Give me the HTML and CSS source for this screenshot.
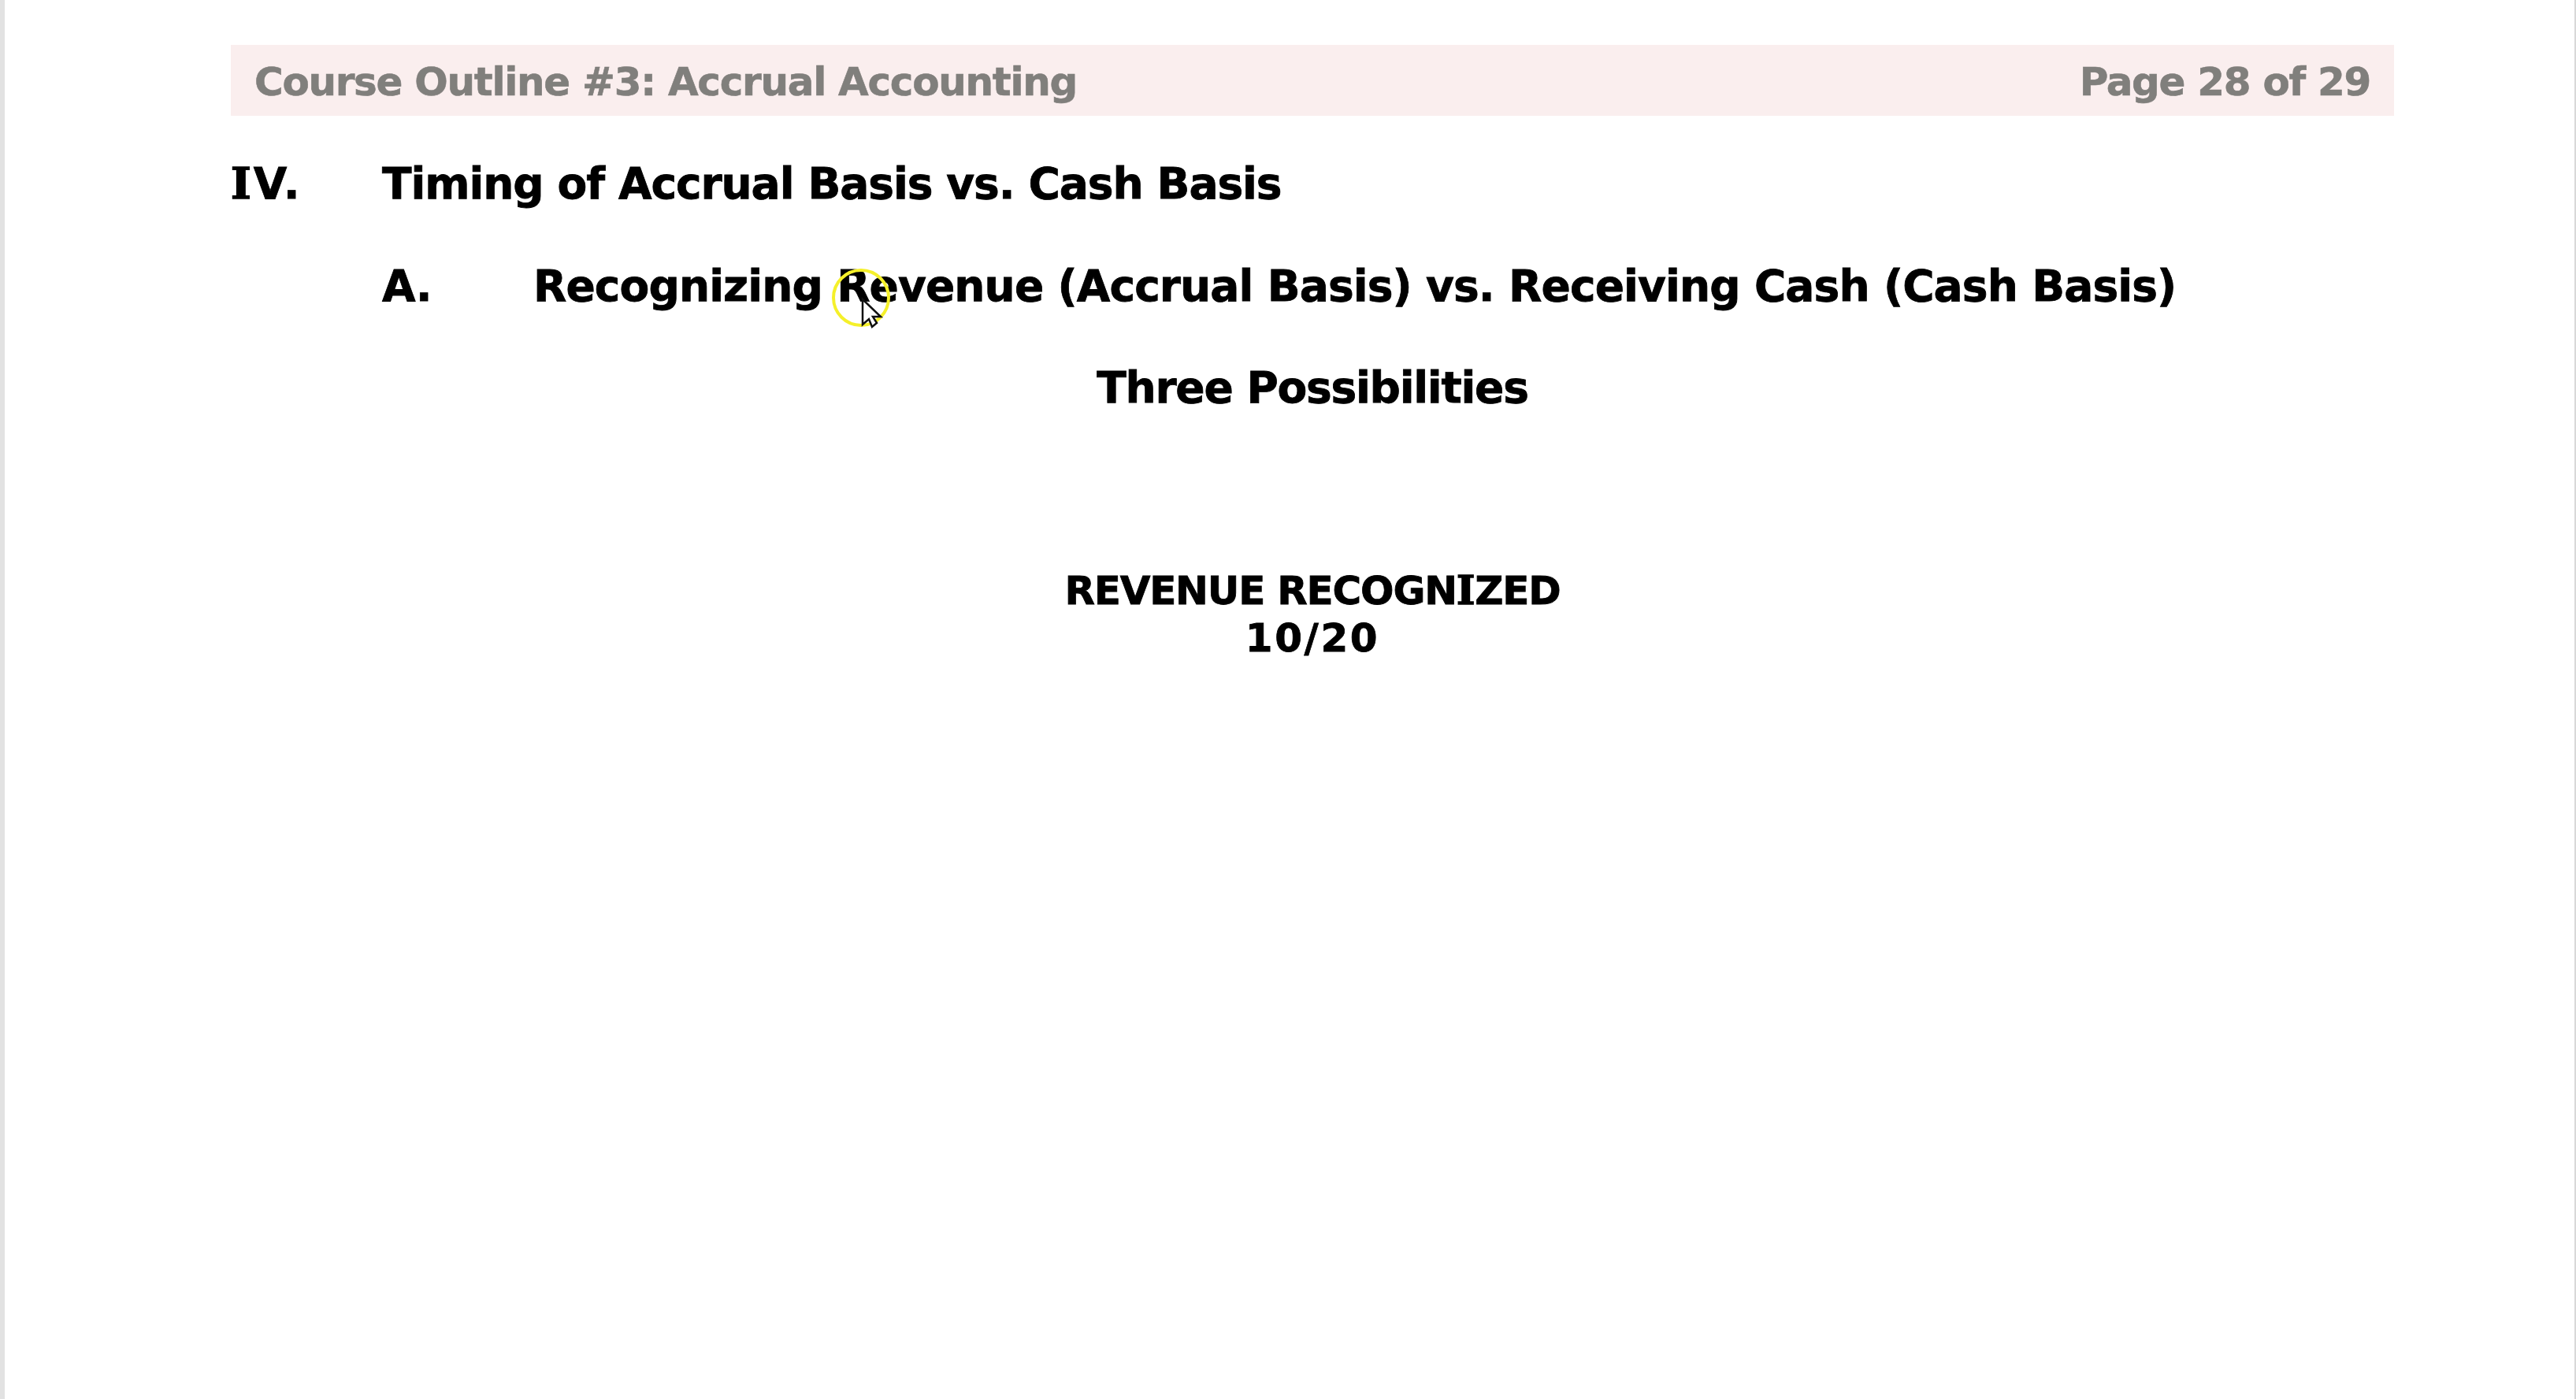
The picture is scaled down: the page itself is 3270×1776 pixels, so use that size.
FILE: index.html
```html
<!DOCTYPE html>
<html lang="en">
<head>
<meta charset="utf-8">
<title>Course Outline #3: Accrual Accounting</title>
<link rel="stylesheet" href="styles.css">
</head>
<body>
<main class="slide">
  <header class="band">
    <span>Course Outline #3: Accrual Accounting</span>
    <span>Page 28 of 29</span>
  </header>
  <h1 class="row row-one"><span class="num num-roman"><span class="serif-i roman">I</span>V.</span><span>Timing of Accrual Basis vs. Cash Basis</span></h1>
  <h2 class="row row-two"><span class="num">A.</span><span>Recognizing Revenue (Accrual Basis) vs. Receiving Cash (Cash Basis)</span></h2>
  <h3 class="center possibilities">Three Possibilities</h3>
  <p class="center event">REVENUE RECOGN<span class="serif-i">I</span>ZED<br><span class="date">10/20</span></p>
</main>
<svg class="cursor" width="80" height="90" viewBox="0 0 80 90" aria-hidden="true">
  <circle cx="37" cy="37" r="35" fill="none" stroke="#f5f02a" stroke-width="4"/>
  <path d="M39 39 L39 71 L47 64 L51 74 L57 69 L52 61 L62 61 Z" fill="#fff" stroke="#111" stroke-width="2.5"/>
</svg>
</body>
</html>
```
FILE: styles.css
```css
html, body {
  margin: 0;
  height: 100%;
  background: #fff;
}
body {
  overflow: hidden;
  position: relative;
  box-sizing: border-box;
  height: 1776px;
  border-left: 6px solid #e2e2e2;
  border-right: 2px solid #d8d8d8;
  font-family: "DejaVu Sans", sans-serif;
  font-weight: 700;
  color: #000;
}
.slide {
  box-sizing: border-box;
  width: 2746px;
  margin-left: 287px;
  padding-top: 57px;
}
.band {
  display: flex;
  justify-content: space-between;
  align-items: center;
  box-sizing: border-box;
  height: 90px;
  padding: 4px 30px 0;
  background: #faeeee;
  color: #807f7c;
  font-size: 50px;
  letter-spacing: -1.3px;
  line-height: 86px;
  -webkit-text-stroke: 0.6px #807f7c;
}
.row, .center {
  margin: 0;
  font-size: 55px;
  font-weight: 700;
  letter-spacing: -0.9px;
  line-height: 68px;
  -webkit-text-stroke: 0.8px #000;
}
.row { display: flex; }
.num { flex: none; width: 192px; }
.num-roman { letter-spacing: 2.5px; }
.serif-i {
  font-family: "DejaVu Serif", serif;
  letter-spacing: 0;
  -webkit-text-stroke: 1.6px #000;
}
.roman { letter-spacing: 3px; }
.row-one { margin-top: 52px; letter-spacing: -1.1px; }
.row-two { margin-top: 62px; padding-left: 192px; }
.center { text-align: center; }
.possibilities { margin-top: 61px; letter-spacing: -1.25px; }
.event {
  margin-top: 194px;
  font-size: 50px;
  letter-spacing: -1.2px;
  line-height: 60px;
}
.date { letter-spacing: 2.6px; }
.cursor {
  position: absolute;
  left: 1050px;
  top: 341px;
}
```
